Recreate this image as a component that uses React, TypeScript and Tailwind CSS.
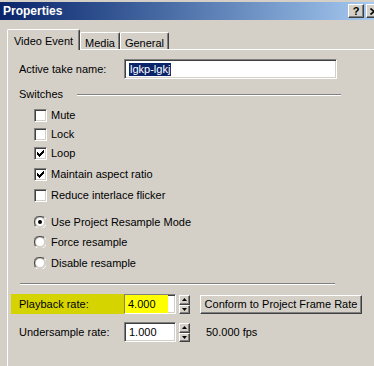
import React from "react";

const raised =
  "border border-t-white border-l-white border-r-[#404040] border-b-[#404040] shadow-[inset_-1px_-1px_0_#808080,inset_1px_1px_0_#d4d0c8] bg-[#d4d0c8]";
const sunken =
  "border border-t-[#808080] border-l-[#808080] border-r-white border-b-white shadow-[inset_1px_1px_0_#404040,inset_-1px_-1px_0_#d4d0c8]";

function CheckMark() {
  const px: [number, number][] = [
    [6, 0],
    [5, 1], [6, 1],
    [0, 2], [4, 2], [5, 2], [6, 2],
    [0, 3], [1, 3], [3, 3], [4, 3], [5, 3],
    [0, 4], [1, 4], [2, 4], [3, 4], [4, 4],
    [1, 5], [2, 5], [3, 5],
    [2, 6],
  ];
  return (
    <svg width="7" height="7" viewBox="0 0 7 7" shapeRendering="crispEdges">
      {px.map(([x, y]) => (
        <rect key={`${x}-${y}`} x={x} y={y} width="1" height="1" fill="#000" />
      ))}
    </svg>
  );
}

function CheckRow({ label, checked, className }: { label: string; checked?: boolean; className?: string }) {
  return (
    <div className={`flex h-[13px] items-center ${className ?? ""}`}>
      <span className={`ml-[26px] flex h-[13px] w-[13px] shrink-0 items-center justify-center bg-white ${sunken}`}>
        {checked && <CheckMark />}
      </span>
      <span className="ml-[4px] leading-none">{label}</span>
    </div>
  );
}

function RadioRow({ label, checked, className }: { label: string; checked?: boolean; className?: string }) {
  return (
    <div className={`flex h-[12px] items-center ${className ?? ""}`}>
      <svg className="ml-[26px] shrink-0" width="12" height="12" viewBox="0 0 12 12">
        <path d="M10.6 1.4 A6 6 0 0 0 1.4 10.6" fill="none" stroke="#808080" strokeWidth="1" />
        <path d="M1.4 10.6 A6 6 0 0 0 10.6 1.4" fill="none" stroke="#ffffff" strokeWidth="1" />
        <path d="M9.9 2.1 A5 5 0 0 0 2.1 9.9" fill="none" stroke="#404040" strokeWidth="1" />
        <path d="M2.1 9.9 A5 5 0 0 0 9.9 2.1" fill="none" stroke="#d4d0c8" strokeWidth="1" />
        <circle cx="6" cy="6" r="4" fill="#ffffff" />
        {checked && <circle cx="6" cy="6" r="2" fill="#000" />}
      </svg>
      <span className="ml-[5px] leading-none">{label}</span>
    </div>
  );
}

function Spinner() {
  return (
    <div className="ml-[3px] flex h-[19px] w-[11px] flex-col">
      <div className={`flex h-[10px] items-center justify-center ${raised}`}>
        <svg width="5" height="3" viewBox="0 0 5 3">
          <path d="M2.5 0 L5 3 L0 3 Z" fill="#000" />
        </svg>
      </div>
      <div className={`flex h-[9px] items-center justify-center ${raised}`}>
        <svg width="5" height="3" viewBox="0 0 5 3">
          <path d="M0 0 L5 0 L2.5 3 Z" fill="#000" />
        </svg>
      </div>
    </div>
  );
}

export default function App() {
  return (
    <div className="h-[366px] w-[374px] overflow-hidden bg-[#d4d0c8] font-['Liberation_Sans',Arial,sans-serif] text-[11px] text-black">
      {/* title bar */}
      <div className="pt-[2px]">
        <div className="flex h-[18px] items-center bg-gradient-to-r from-[#0a246a] to-[#a6caf0] pl-[3px]">
          <span className="text-[12px] font-bold text-white">Properties</span>
          <div className="ml-auto flex gap-[2px] pl-2">
            <div className={`flex h-[14px] w-[16px] items-center justify-center text-[11px] font-bold leading-none ${raised}`}>
              ?
            </div>
            <div className={`-mr-[8px] flex h-[14px] w-[16px] items-center justify-center ${raised}`}>
              <svg width="8" height="7" viewBox="0 0 8 7">
                <path d="M0.5 0.5 L7.5 6.5 M7.5 0.5 L0.5 6.5" stroke="#000" strokeWidth="1.6" />
              </svg>
            </div>
          </div>
        </div>
      </div>

      {/* tabs */}
      <div className="mt-[9px] flex h-[20px] items-end pl-[7px]">
        <div className="relative z-10 -mb-[1px] flex h-[21px] w-[73px] items-start justify-center rounded-t-[2px] border-l border-t border-r border-l-white border-t-white border-r-[#404040] bg-[#d4d0c8] pt-[3px] shadow-[inset_-1px_0_0_#808080]">
          Video Event
        </div>
        <div className="flex h-[17px] w-[40px] items-start justify-center rounded-t-[2px] border-l border-t border-r border-l-white border-t-white border-r-[#404040] pt-[2px] shadow-[inset_-1px_0_0_#808080]">
          Media
        </div>
        <div className="flex h-[17px] w-[49px] items-start justify-center rounded-t-[2px] border-l border-t border-r border-l-white border-t-white border-r-[#404040] pt-[2px] shadow-[inset_-1px_0_0_#808080]">
          General
        </div>
      </div>

      {/* panel */}
      <div className="ml-[7px] h-[400px] w-[400px] border-l border-t border-l-white border-t-white">
        <div className="flex flex-col">
          <div className="mt-[9px] flex h-[20px] items-center">
            <span className="ml-[11px] w-[105px]">Active take name:</span>
            <div className={`flex h-[20px] w-[213px] items-center bg-white pl-[4px] ${sunken}`}>
              <span className="flex h-[13px] items-center bg-[#0a246a] px-[1px] text-white">lgkp-lgkj</span>
            </div>
          </div>

          <div className="mt-[9px] flex h-[13px] items-center">
            <span className="ml-[11px] leading-none">Switches</span>
            <div className="ml-[14px] h-[2px] w-[264px] border-t border-b border-t-[#808080] border-b-white" />
          </div>

          <CheckRow className="mt-[8px]" label="Mute" />
          <CheckRow className="mt-[6px]" label="Lock" />
          <CheckRow className="mt-[6px]" label="Loop" checked />
          <CheckRow className="mt-[8px]" label="Maintain aspect ratio" checked />
          <CheckRow className="mt-[8px]" label="Reduce interlace flicker" />

          <RadioRow className="mt-[14px]" label="Use Project Resample Mode" checked />
          <RadioRow className="mt-[8px]" label="Force resample" />
          <RadioRow className="mt-[9px]" label="Disable resample" />

          <div className="ml-[12px] mt-[14px] h-[2px] w-[315px] border-t border-b border-t-[#808080] border-b-white" />

          <div className="mt-[9px] flex h-[20px] items-center">
            <div className="ml-[3px] flex h-[20px] w-[113px] items-center bg-[#d6d400] pl-[8px]">
              Playback rate:
            </div>
            <div className={`flex h-[20px] w-[52px] items-stretch bg-white ${sunken}`}>
              <span className="flex w-[43px] items-center bg-[#ffff00] pl-[3px]">4.000</span>
            </div>
            <Spinner />
            <button
              type="button"
              className={`ml-[10px] flex h-[19px] w-[162px] items-center justify-center ${raised}`}
            >
              Conform to Project Frame Rate
            </button>
          </div>

          <div className="mt-[8px] flex h-[20px] items-center">
            <span className="ml-[11px] w-[105px]">Undersample rate:</span>
            <div className={`flex h-[20px] w-[52px] items-center bg-white pl-[4px] ${sunken}`}>1.000</div>
            <Spinner />
            <span className="ml-[16px]">50.000 fps</span>
          </div>
        </div>
      </div>
    </div>
  );
}
